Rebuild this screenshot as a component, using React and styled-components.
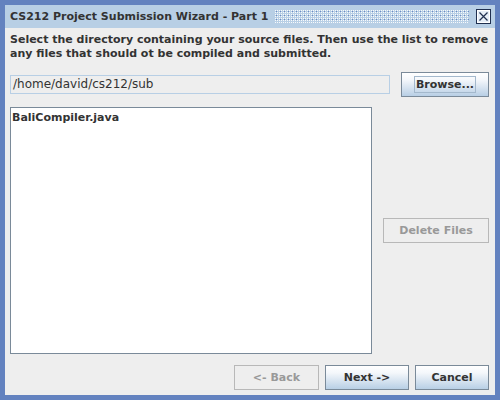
import React from "react";
import styled, { createGlobalStyle } from "styled-components";

const Global = createGlobalStyle`
  html, body { margin: 0; padding: 0; background: #6382bf; }
  #root { width: 500px; height: 400px; }
`;

const Frame = styled.div`
  box-sizing: border-box;
  width: 500px;
  height: 400px;
  border: 5px solid #6382bf;
  background: #eeeeee;
  display: flex;
  flex-direction: column;
  font-family: "DejaVu Sans", "Liberation Sans", sans-serif;
  color: #333333;
`;

const TitleBar = styled.div`
  height: 23px;
  background: #b8cfe5;
  display: flex;
  align-items: center;
  padding: 0 4px 0 5px;
  gap: 7px;
`;

const Title = styled.span`
  font-size: 11px;
  font-weight: bold;
  white-space: nowrap;
`;

const Bumps = styled.div`
  flex: 1;
  height: 13px;
  background-image:
    radial-gradient(circle at 0.5px 0.5px, #ffffff 0.6px, transparent 0.7px),
    radial-gradient(circle at 1.5px 1.5px, #6382bf 0.6px, transparent 0.7px);
  background-size: 2px 2px, 4px 4px;
  opacity: 0.9;
`;

const CloseBtn = styled.div`
  width: 15px;
  height: 15px;
  display: flex;
`;

const Content = styled.div`
  flex: 1;
  display: flex;
  flex-direction: column;
  padding: 5px 6px 5px 5px;
  min-height: 0;
`;

const Instructions = styled.p`
  margin: 0;
  font-size: 11px;
  font-weight: bold;
  line-height: 14px;
  white-space: nowrap;
`;

const DirRow = styled.div`
  display: flex;
  align-items: center;
  margin-top: 11px;
  gap: 11px;
`;

const PathField = styled.div`
  box-sizing: border-box;
  flex: 1;
  height: 19px;
  border: 1px solid #b8cfe5;
  background: #eeeeee;
  font-size: 12px;
  line-height: 17px;
  padding: 0 2px;
`;

const Button = styled.button`
  box-sizing: border-box;
  width: ${(p) => p.$w}px;
  height: 25px;
  padding: 0;
  margin: 0;
  font-family: inherit;
  font-size: 11px;
  font-weight: bold;
  color: ${(p) => (p.disabled ? "#999999" : "#333333")};
  border: 1px solid ${(p) => (p.disabled ? "#b8b8b8" : "#7a8a99")};
  background: ${(p) =>
    p.disabled ? "#eeeeee" : "linear-gradient(#ffffff 0%, #f4f7fb 30%, #b8cfe5 100%)"};
  display: flex;
  align-items: center;
  justify-content: center;
`;

const FocusLabel = styled.span`
  border: 1px solid #a3b8cc;
  padding: 0 1px;
  line-height: 15px;
`;

const Middle = styled.div`
  flex: 1;
  display: flex;
  margin-top: 10px;
  gap: 11px;
  min-height: 0;
`;

const FileList = styled.div`
  box-sizing: border-box;
  width: 362px;
  border: 1px solid #7a8a99;
  background: #ffffff;
  padding: 2px 1px;
`;

const FileItem = styled.div`
  font-size: 11px;
  font-weight: bold;
  line-height: 15px;
  color: #333333;
`;

const SideCol = styled.div`
  flex: 1;
  display: flex;
  align-items: center;
`;

const Footer = styled.div`
  display: flex;
  justify-content: flex-end;
  gap: 6px;
  margin-top: 11px;
`;

export default function App() {
  return (
    <>
      <Global />
      <Frame>
        <TitleBar>
          <Title>CS212 Project Submission Wizard - Part 1</Title>
          <Bumps />
          <CloseBtn>
            <svg width="15" height="15" viewBox="0 0 15 15">
              <rect x="0.5" y="0.5" width="14" height="14" fill="#b8cfe5" stroke="#1f2f4f" />
              <rect x="1.5" y="1.5" width="12" height="12" fill="#e6eef7" stroke="#ffffff" />
              <path d="M3.5 3.5 L11.5 11.5 M11.5 3.5 L3.5 11.5" stroke="#1f2f4f" strokeWidth="1.2" />
            </svg>
          </CloseBtn>
        </TitleBar>
        <Content>
          <Instructions>
            Select the directory containing your source files. Then use the list to remove
            <br />
            any files that should ot be compiled and submitted.
          </Instructions>
          <DirRow>
            <PathField>/home/david/cs212/sub</PathField>
            <Button $w={88}>
              <FocusLabel>Browse...</FocusLabel>
            </Button>
          </DirRow>
          <Middle>
            <FileList>
              <FileItem>BaliCompiler.java</FileItem>
            </FileList>
            <SideCol>
              <Button $w={106} disabled>
                Delete Files
              </Button>
            </SideCol>
          </Middle>
          <Footer>
            <Button $w={85} disabled>
              &lt;- Back
            </Button>
            <Button $w={84}>Next -&gt;</Button>
            <Button $w={74}>Cancel</Button>
          </Footer>
        </Content>
      </Frame>
    </>
  );
}
